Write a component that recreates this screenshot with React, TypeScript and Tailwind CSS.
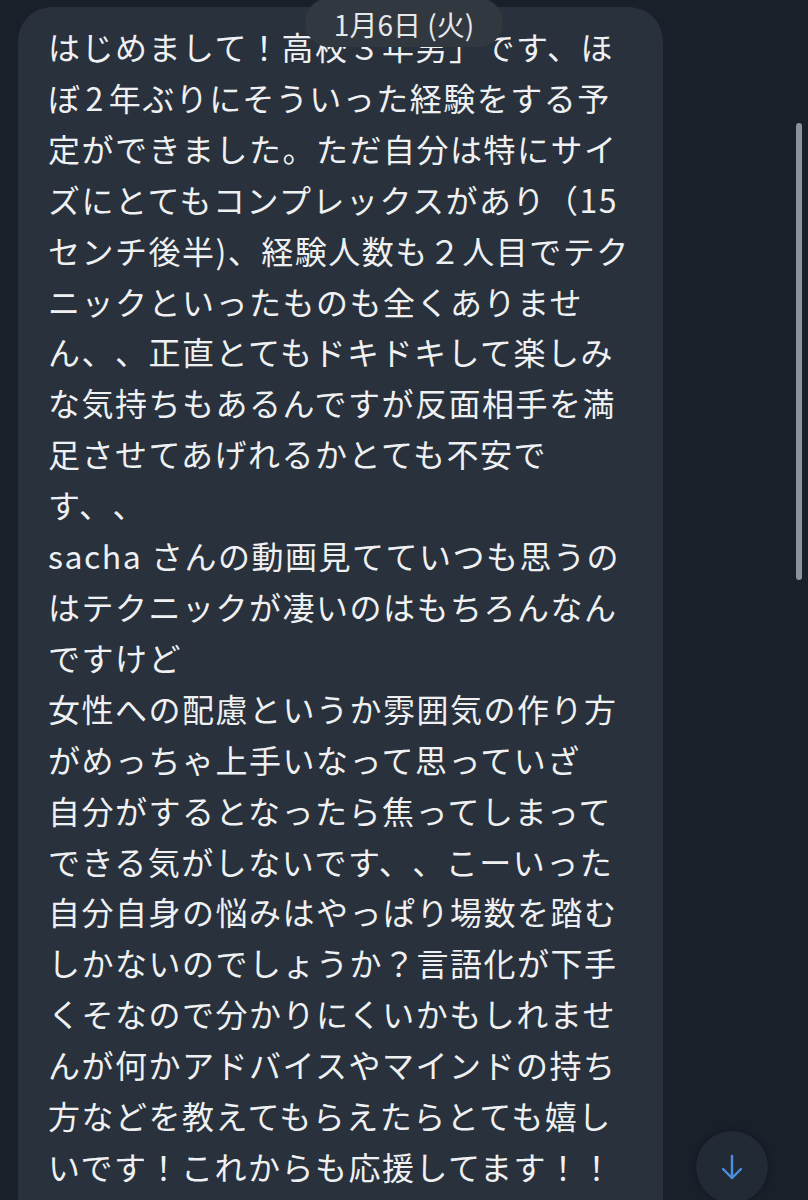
import type { ReactNode } from 'react';

const lines: ReactNode[] = [
  'はじめまして！高校３年男」です、ほ',
  <>
    ぼ<span className="mx-[4px]">2</span>年ぶりにそういった経験をする予
  </>,
  '定ができました。ただ自分は特にサイ',
  'ズにとてもコンプレックスがあり（15',
  'センチ後半)、経験人数も２人目でテク',
  'ニックといったものも全くありませ',
  'ん、、正直とてもドキドキして楽しみ',
  'な気持ちもあるんですが反面相手を満',
  '足させてあげれるかとても不安で',
  'す、、',
  'sacha さんの動画見てていつも思うの',
  'はテクニックが凄いのはもちろんなん',
  'ですけど',
  '女性への配慮というか雰囲気の作り方',
  'がめっちゃ上手いなって思っていざ',
  '自分がするとなったら焦ってしまって',
  'できる気がしないです、、こーいった',
  '自分自身の悩みはやっぱり場数を踏む',
  'しかないのでしょうか？言語化が下手',
  'くそなので分かりにくいかもしれませ',
  'んが何かアドバイスやマインドの持ち',
  '方などを教えてもらえたらとても嬉し',
  'いです！これからも応援してます！！',
];

export default function App() {
  return (
    <div
      className="relative h-[1200px] w-[808px] overflow-hidden bg-[#19202a]"
      style={{ fontFamily: '"Noto Sans CJK JP", "Noto Sans", sans-serif' }}
    >
      <div className="ml-[18px] mt-[7px] h-[1300px] w-[645px] rounded-t-[34px] bg-[#28313c] pl-[30px] pt-[14px]">
        {lines.map((line, i) => (
          <div
            key={i}
            className="whitespace-nowrap text-[32px] leading-[50.9px] tracking-[1.5px] text-[#eef0f2] [text-spacing-trim:space-all]"
          >
            {line}
          </div>
        ))}
      </div>

      <div className="absolute left-[305px] top-[-2px] flex h-[49px] w-[198px] items-center justify-center rounded-full bg-[#32383f]">
        <span className="mt-[2px] text-[28px] leading-none text-[#e6e8ea]">1月6日 (火)</span>
      </div>

      <div className="absolute left-[796px] top-[123px] h-[457px] w-[6px] rounded-full bg-[#8e9197]" />

      <div className="absolute left-[696px] top-[1131px] flex h-[72px] w-[72px] items-center justify-center rounded-full bg-[#222a35] shadow-[0_0_6px_rgba(0,0,0,0.3)]">
        <svg width="22" height="26" viewBox="0 0 22 26" fill="none" stroke="#4a8fe0" strokeWidth="2.4" strokeLinecap="round" strokeLinejoin="round">
          <line x1="11" y1="2" x2="11" y2="24" />
          <polyline points="2,15 11,24 20,15" />
        </svg>
      </div>
    </div>
  );
}
